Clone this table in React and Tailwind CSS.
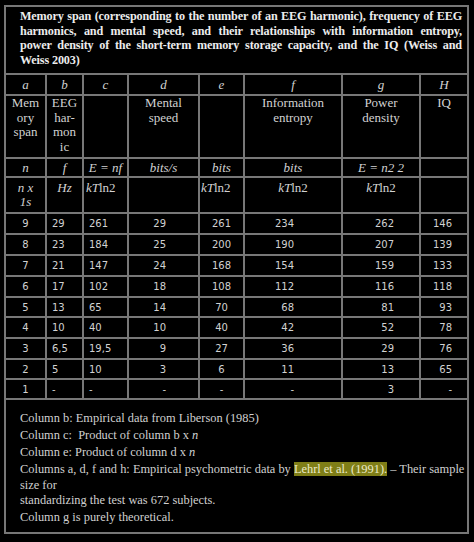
import React from "react";

const serif = "font-['Liberation_Serif',serif]";
const sans = "font-['DejaVu_Sans',sans-serif]";

const rows = [
  ["9", "29", "261", "29", "261", "234", "262", "146"],
  ["8", "23", "184", "25", "200", "190", "207", "139"],
  ["7", "21", "147", "24", "168", "154", "159", "133"],
  ["6", "17", "102", "18", "108", "112", "116", "118"],
  ["5", "13", "65", "14", "70", "68", "81", "93"],
  ["4", "10", "40", "10", "40", "42", "52", "78"],
  ["3", "6,5", "19,5", "9", "27", "36", "29", "76"],
  ["2", "5", "10", "3", "6", "11", "13", "65"],
  ["1", "-", "-", "-", "-", "-", "3", "-"],
];

const dataCls = [
  "justify-center",
  "justify-start pl-[5px]",
  "justify-start pl-[5px]",
  "justify-end pr-[32px]",
  "justify-center",
  "justify-end pr-[47px]",
  "justify-end pr-[25px]",
  "justify-end pr-[15px]",
];

const letters = ["a", "b", "c", "d", "e", "f", "g", "H"];

function KT() {
  return (
    <span>
      <i>kT</i>ln2
    </span>
  );
}

const titleLines = [
  "Memory span (corresponding to the number of an EEG harmonic), frequency of EEG",
  "harmonics, and mental speed, and their relationships with information entropy,",
  "power density of the short-term memory storage capacity, and the IQ (Weiss and",
];

export default function App() {
  return (
    <div className="w-[474px] h-[542px] bg-black pt-[5px] pl-[4px] overflow-hidden">
      <div
        className={`grid grid-cols-[39px_35px_43px_69px_43px_96px_76px_46px] grid-rows-[66px_19px_61px_17px_34px_19px_19px_19px_19px_18px_19px_19px_18px_18px_132px] gap-[2px] p-[2px] bg-[#777777] w-[465px] text-[#d2d2d2] ${serif}`}
      >
        {/* Title */}
        <div className="col-span-8 bg-black pl-[14px] pr-[5px] pt-[2px] text-[12.2px] tracking-[-0.15px] leading-[14.5px] font-bold text-[#ececec]">
          {titleLines.map((l, i) => (
            <div key={i} className="whitespace-nowrap text-justify [text-align-last:justify]">
              {l}
            </div>
          ))}
          <div>Weiss 2003)</div>
        </div>

        {/* letters */}
        {letters.map((l) => (
          <div key={l} className="bg-black flex items-center justify-center italic text-[13px]">
            {l}
          </div>
        ))}

        {/* labels */}
        <div className="bg-black text-center text-[13px] leading-[14.5px]">
          Mem<br />ory<br />span
        </div>
        <div className="bg-black text-center text-[13px] leading-[14.5px]">
          EEG<br />har-<br />mon<br />ic
        </div>
        <div className="bg-black" />
        <div className="bg-black text-center text-[13px] leading-[14.5px]">
          Mental<br />speed
        </div>
        <div className="bg-black" />
        <div className="bg-black text-center text-[13px] leading-[14.5px]">
          Information<br />entropy
        </div>
        <div className="bg-black text-center text-[13px] leading-[14.5px]">
          Power<br />density
        </div>
        <div className="bg-black text-center text-[13px] leading-[14.5px]">IQ</div>

        {/* units 1 */}
        <div className="bg-black flex items-center justify-center italic text-[13px]">n</div>
        <div className="bg-black flex items-center justify-center italic text-[13px]">f</div>
        <div className="bg-black flex items-center justify-center italic text-[13px] whitespace-nowrap">E = nf</div>
        <div className="bg-black flex items-center justify-center italic text-[13px]">bits/s</div>
        <div className="bg-black flex items-center justify-center italic text-[13px]">bits</div>
        <div className="bg-black flex items-center justify-center italic text-[13px]">bits</div>
        <div className="bg-black flex items-center justify-center italic text-[13px] whitespace-nowrap">E = n2 2</div>
        <div className="bg-black" />

        {/* units 2 */}
        <div className="bg-black text-center italic text-[13px] leading-[14px] pt-[3px]">
          n x<br />1s
        </div>
        <div className="bg-black text-center italic text-[13px] leading-[14px] pt-[3px]">Hz</div>
        <div className="bg-black text-left pl-[2px] text-[13px] leading-[14px] pt-[3px]">
          <KT />
        </div>
        <div className="bg-black" />
        <div className="bg-black text-left pl-[1px] text-[13px] leading-[14px] pt-[3px]">
          <KT />
        </div>
        <div className="bg-black text-center text-[13px] leading-[14px] pt-[3px]">
          <KT />
        </div>
        <div className="bg-black text-center text-[13px] leading-[14px] pt-[3px]">
          <KT />
        </div>
        <div className="bg-black" />

        {/* data */}
        {rows.map((r, ri) =>
          r.map((v, ci) => (
            <div
              key={`${ri}-${ci}`}
              className={`bg-black flex items-center text-[10px] ${sans} ${dataCls[ci]}`}
            >
              {v}
            </div>
          ))
        )}

        {/* footer */}
        <div className="col-span-8 bg-black pl-[14px] pt-[9.5px] text-[12.4px] text-[#d0d0d0] whitespace-nowrap">
          <div className="leading-[17px]">Column b: Empirical data from Liberson (1985)</div>
          <div className="leading-[17px]">
            Column c:&nbsp; Product of column b x <i>n</i>
          </div>
          <div className="leading-[17px]">
            Column e: Product of column d x <i>n</i>
          </div>
          <div className="leading-[17px]">
            Columns a, d, f and h: Empirical psychometric data by{" "}
            <span className="bg-[#7f7e17] text-[#ecebc8]">Lehrl et al. (1991).</span> – Their sample
          </div>
          <div className="leading-[14px]">size for</div>
          <div className="leading-[17px]">standardizing the test was 672 subjects.</div>
          <div className="leading-[17px]">Column g is purely theoretical.</div>
        </div>
      </div>
    </div>
  );
}
